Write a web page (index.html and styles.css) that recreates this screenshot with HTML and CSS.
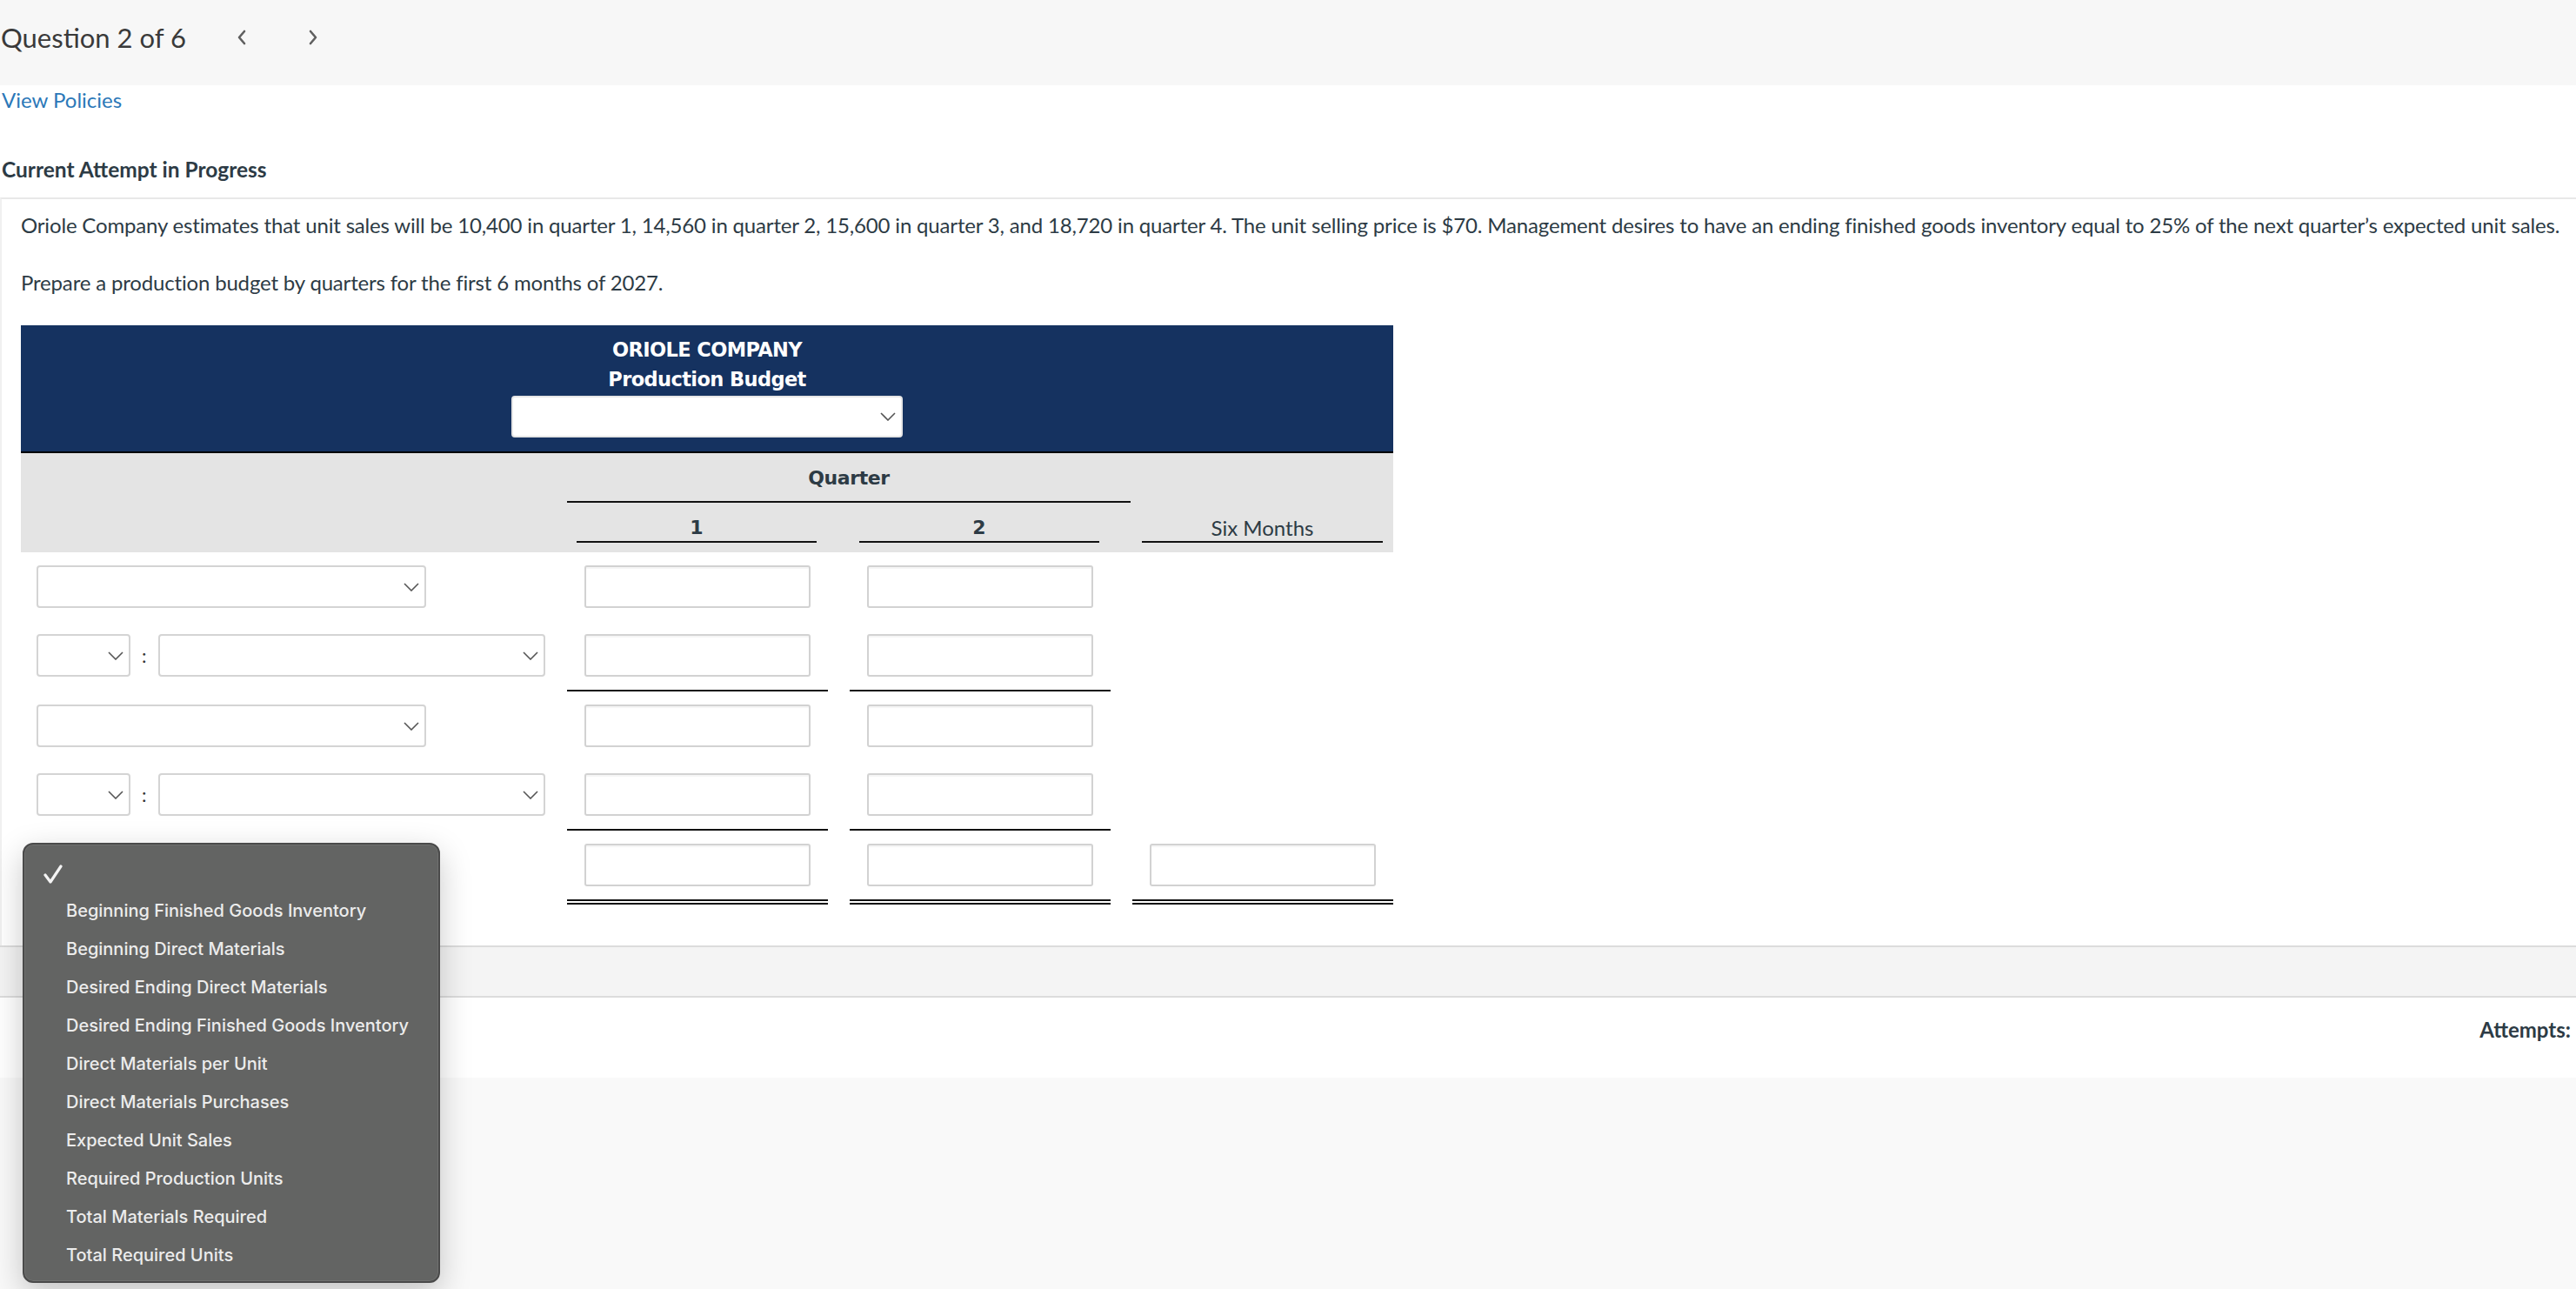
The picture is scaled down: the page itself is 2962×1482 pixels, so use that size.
FILE: index.html
```html
<!DOCTYPE html>
<html lang="en">
<head>
  <meta charset="UTF-8">
  <meta name="viewport" content="width=device-width, initial-scale=1.0">
  <title>Question 2 of 6</title>
  <link rel="stylesheet" href="styles.css">
</head>
<body>
  <div class="topbar">
    <span class="q-title">Question 2 of 6</span>
    <button class="nav-btn prev" aria-label="Previous">
      <svg width="12" height="18" viewBox="0 0 12 18"><polyline points="9,2 3,9 9,16" fill="none" stroke="#5f5f5f" stroke-width="2.6" stroke-linecap="round" stroke-linejoin="round"/></svg>
    </button>
    <button class="nav-btn next" aria-label="Next">
      <svg width="12" height="18" viewBox="0 0 12 18"><polyline points="3,2 9,9 3,16" fill="none" stroke="#5f5f5f" stroke-width="2.6" stroke-linecap="round" stroke-linejoin="round"/></svg>
    </button>
  </div>

  <div class="page">
    <a class="policies" href="#">View Policies</a>
    <h2 class="attempt-title">Current Attempt in Progress</h2>

    <div class="question">
      <p class="prompt">Oriole Company estimates that unit sales will be 10,400 in quarter 1, 14,560 in quarter 2, 15,600 in quarter 3, and 18,720 in quarter 4. The unit selling price is $70. Management desires to have an ending finished goods inventory equal to 25% of the next quarter’s expected unit sales.</p>
      <p class="prompt">Prepare a production budget by quarters for the first 6 months of 2027.</p>

      <div class="budget">
        <div class="budget-head">
          <div class="company">ORIOLE COMPANY</div>
          <div class="company">Production Budget</div>
          <div class="select head-select"><svg width="18" height="10" viewBox="0 0 18 10"><polyline points="1,1 9,9 17,1" fill="none" stroke="#555" stroke-width="1.6"/></svg></div>
        </div>

        <div class="colhead">
          <div class="quarter">Quarter</div>
          <div class="qcell"><span>1</span></div>
          <div class="qcell"><span>2</span></div>
          <div class="qcell six"><span>Six Months</span></div>
        </div>

        <div class="grid">
          <!-- row 1 -->
          <div class="label"><div class="select wide"><svg width="18" height="10" viewBox="0 0 18 10"><polyline points="1,1 9,9 17,1" fill="none" stroke="#555" stroke-width="1.6"/></svg></div></div>
          <div class="cell"><div class="box"></div></div>
          <div class="cell"><div class="box"></div></div>
          <div class="cell"></div>

          <!-- row 2 -->
          <div class="label">
            <div class="select small"><svg width="18" height="10" viewBox="0 0 18 10"><polyline points="1,1 9,9 17,1" fill="none" stroke="#555" stroke-width="1.6"/></svg></div>
            <span class="colon">:</span>
            <div class="select long"><svg width="18" height="10" viewBox="0 0 18 10"><polyline points="1,1 9,9 17,1" fill="none" stroke="#555" stroke-width="1.6"/></svg></div>
          </div>
          <div class="cell line"><div class="box"></div></div>
          <div class="cell line"><div class="box"></div></div>
          <div class="cell"></div>

          <!-- row 3 -->
          <div class="label"><div class="select wide"><svg width="18" height="10" viewBox="0 0 18 10"><polyline points="1,1 9,9 17,1" fill="none" stroke="#555" stroke-width="1.6"/></svg></div></div>
          <div class="cell"><div class="box"></div></div>
          <div class="cell"><div class="box"></div></div>
          <div class="cell"></div>

          <!-- row 4 -->
          <div class="label">
            <div class="select small"><svg width="18" height="10" viewBox="0 0 18 10"><polyline points="1,1 9,9 17,1" fill="none" stroke="#555" stroke-width="1.6"/></svg></div>
            <span class="colon">:</span>
            <div class="select long"><svg width="18" height="10" viewBox="0 0 18 10"><polyline points="1,1 9,9 17,1" fill="none" stroke="#555" stroke-width="1.6"/></svg></div>
          </div>
          <div class="cell line"><div class="box"></div></div>
          <div class="cell line"><div class="box"></div></div>
          <div class="cell"></div>

          <!-- row 5 -->
          <div class="label"></div>
          <div class="cell double"><div class="box"></div></div>
          <div class="cell double"><div class="box"></div></div>
          <div class="cell double"><div class="box"></div></div>
        </div>
      </div>
    </div>

    <div class="gray-band"></div>
    <div class="attempts-band">Attempts:</div>
  </div>

  <!-- open dropdown of the row 5 select -->
  <ul class="menu">
    <li class="checked"><svg width="22" height="22" viewBox="0 0 22 22"><polyline points="2,12 8,20 20,2" fill="none" stroke="#f4f4f4" stroke-width="3.2" stroke-linecap="round" stroke-linejoin="round"/></svg></li>
    <li>Beginning Finished Goods Inventory</li>
    <li>Beginning Direct Materials</li>
    <li>Desired Ending Direct Materials</li>
    <li>Desired Ending Finished Goods Inventory</li>
    <li>Direct Materials per Unit</li>
    <li>Direct Materials Purchases</li>
    <li>Expected Unit Sales</li>
    <li>Required Production Units</li>
    <li>Total Materials Required</li>
    <li>Total Required Units</li>
  </ul>
</body>
</html>
```

FILE: styles.css
```css
/* page */
html {
  background: #f9f9f9;
}

body {
  margin: 0;
  font-family: Lato, "Open Sans", sans-serif;
  color: #2d3b45;
  position: relative;
  min-height: 1482px;
}

.topbar {
  height: 98px;
  background: #f7f7f7;
  display: flex;
  align-items: flex-start;
  padding-left: 1px;
}

.q-title {
  font-size: 31px;
  line-height: 40px;
  margin-top: 23px;
  color: #3a3a3a;
}

.nav-btn {
  margin-top: 25px;
  width: 40px;
  height: 36px;
  border: none;
  background: none;
  padding: 0;
  display: flex;
  align-items: center;
  justify-content: center;
}

.nav-btn.prev {
  margin-left: 44px;
}

.nav-btn.next {
  margin-left: 42px;
}

.page {
  background: #fff;
}

.policies {
  display: block;
  padding: 2px 0 0 2px;
  line-height: 30px;
  font-size: 24px;
  color: #2b78b8;
  text-decoration: none;
}

.attempt-title {
  margin: 50px 0 17px;
  padding-left: 2px;
  font-size: 24.5px;
  line-height: 30px;
  font-weight: 700;
}

/* question box */
.question {
  border-top: 2px solid #e8e8e8;
  border-left: 2px solid #f0f0f0;
  padding: 0 22px 47px;
}

.prompt {
  margin: 13px 0 32px;
  font-size: 24px;
  line-height: 34px;
  letter-spacing: -0.17px;
  white-space: nowrap;
}

.prompt + .prompt {
  margin-top: 32px;
}

/* budget table */
.budget {
  width: 1578px;
}

.budget-head {
  background: #153260;
  border-bottom: 2px solid #000;
  padding: 11px 0 16px;
  display: flex;
  flex-direction: column;
  align-items: center;
}

.company {
  color: #fff;
  font-family: "DejaVu Sans", Verdana, sans-serif;
  font-weight: 700;
  font-size: 22.5px;
  line-height: 34px;
  letter-spacing: -0.6px;
}

.select {
  height: 48px;
  background: #fff;
  border: 2px solid #d4d4d4;
  border-radius: 4px;
  box-sizing: border-box;
  display: flex;
  align-items: center;
  justify-content: flex-end;
  padding-right: 6px;
}

.head-select {
  width: 450px;
  margin-top: 2px;
  border-color: #e6e6e6;
}

.colhead {
  background: #e4e4e4;
  display: grid;
  grid-template-columns: 603px 300px 300px 300px;
  column-gap: 25px;
  padding-bottom: 11px;
  font-size: 24px;
  color: #2d3b45;
}

.quarter {
  grid-column: 2 / 4;
  grid-row: 1;
  margin-right: -23px;
  text-align: center;
  font-family: "DejaVu Sans", Verdana, sans-serif;
  font-size: 22px;
  font-weight: 700;
  letter-spacing: -0.4px;
  line-height: 30px;
  padding: 14px 0 11px;
  border-bottom: 2px solid #111;
}

.qcell {
  grid-row: 2;
  padding: 14px 13px 0 11px;
}

.qcell:nth-of-type(2) {
  grid-column: 2;
}

.qcell:nth-of-type(3) {
  grid-column: 3;
}

.qcell.six {
  grid-column: 4;
  padding-right: 12px;
}

.qcell span {
  display: block;
  text-align: center;
  line-height: 30px;
  font-family: "DejaVu Sans", Verdana, sans-serif;
  font-size: 22px;
  font-weight: 700;
  border-bottom: 2px solid #111;
}

.qcell.six span {
  font-family: Lato, sans-serif;
  font-size: 24px;
  font-weight: 400;
}

.grid {
  display: grid;
  grid-template-columns: 603px 300px 300px 300px;
  column-gap: 25px;
}

.label {
  padding: 15px 0 15px 18px;
  display: flex;
  align-items: flex-start;
}

.label .wide {
  width: 448px;
  height: 49px;
}

.label .small {
  width: 108px;
  height: 49px;
}

.label .long {
  width: 446px;
  height: 49px;
}

.colon {
  width: 32px;
  text-align: center;
  font-size: 22px;
  line-height: 49px;
  color: #333;
}

.cell {
  padding: 15px 0;
  display: flex;
  justify-content: center;
  align-items: flex-start;
}

.cell.line {
  border-bottom: 2px solid #111;
}

.cell.double {
  border-bottom: 6px double #111;
}

.box {
  width: 260px;
  height: 49px;
  box-sizing: border-box;
  border: 2px solid #d2d2d2;
  border-radius: 3px;
  box-shadow: inset 0 2px 1px rgba(0, 0, 0, 0.04);
  background: #fff;
}

/* bottom bands */
.gray-band {
  height: 56px;
  background: #f4f4f4;
  border-top: 2px solid #dcdcdc;
  border-bottom: 2px solid #dcdcdc;
}

.attempts-band {
  height: 92px;
  line-height: 74px;
  text-align: right;
  padding-right: 6px;
  font-size: 24px;
  font-weight: 700;
  background: #fff;
}

/* open dropdown */
.menu {
  position: absolute;
  left: 26px;
  top: 969px;
  width: 480px;
  height: 506px;
  box-sizing: border-box;
  margin: 0;
  padding: 14px 0 12px;
  list-style: none;
  background: #636463;
  border: 2px solid #4a4a4a;
  border-radius: 12px;
  box-shadow: 0 12px 36px rgba(0, 0, 0, 0.22), inset 0 0 0 1px rgba(255, 255, 255, 0.08);
  font-family: Inter, Roboto, "Noto Sans", sans-serif;
  font-size: 20px;
  font-weight: 500;
  color: #ececec;
}

.menu li {
  height: 44px;
  line-height: 44px;
  padding-left: 48px;
}

.menu li.checked {
  height: 40px;
  padding-left: 22px;
  display: flex;
  align-items: center;
}
```
